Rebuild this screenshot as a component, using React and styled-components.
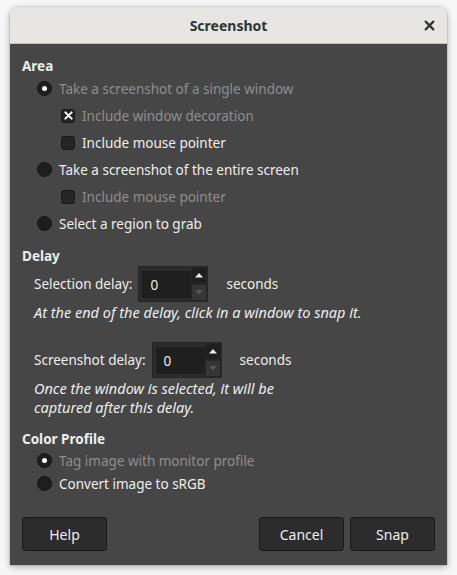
import React from "react";
import styled, { createGlobalStyle } from "styled-components";

const GlobalStyle = createGlobalStyle`
  html, body {
    margin: 0;
    padding: 0;
    background: #f7f7f7;
  }
  body {
    font-family: "Noto Sans", "Open Sans", sans-serif;
    font-size: 13.5px;
  }
`;

const Page = styled.div`
  padding: 7px 10px 10px 10px;
`;

const Window = styled.div`
  width: 437px;
  height: 558px;
  display: flex;
  flex-direction: column;
  border-radius: 8px 8px 0 0;
  overflow: hidden;
  box-shadow: 0 2px 7px rgba(0, 0, 0, 0.3), 0 0 0 1px rgba(0, 0, 0, 0.08);
`;

const TitleBar = styled.div`
  height: 36px;
  flex: none;
  display: grid;
  grid-template-columns: 40px 1fr 40px;
  align-items: center;
  background: #e8e6e3;
  border-bottom: 1px solid #c6c1bc;
  color: #2e3436;
`;

const Title = styled.div`
  grid-column: 2;
  text-align: center;
  font-weight: bold;
  font-size: 14px;
`;

const CloseButton = styled.div`
  display: flex;
  align-items: center;
  justify-content: center;
  padding-left: 4px;
`;

const Body = styled.div`
  flex: 1;
  background: #464646;
  color: #eeeeec;
  padding: 13px 12px 13px 12px;
  display: flex;
  flex-direction: column;
`;

const Heading = styled.div`
  font-weight: bold;
  height: ${(p) => p.$h || 18}px;
  line-height: ${(p) => p.$h || 18}px;
  margin-top: ${(p) => p.$top || 0}px;
`;

const OptionRow = styled.div`
  display: flex;
  align-items: center;
  gap: 7px;
  height: ${(p) => p.$h}px;
  padding-left: ${(p) => p.$indent}px;
  color: ${(p) => (p.$disabled ? "#8e8e8e" : "#eeeeec")};
`;

const Radio = styled.span`
  width: 13px;
  height: 13px;
  flex: none;
  border-radius: 50%;
  background: #1e1e1e;
  border: 1px solid #161616;
  display: flex;
  align-items: center;
  justify-content: center;
  &::after {
    content: "";
    display: ${(p) => (p.$checked ? "block" : "none")};
    width: 5px;
    height: 5px;
    border-radius: 50%;
    background: #ffffff;
  }
`;

const Check = styled.span`
  width: 12px;
  height: 12px;
  flex: none;
  border-radius: 3px;
  background: #252525;
  border: 1px solid #1a1a1a;
  display: flex;
  align-items: center;
  justify-content: center;
`;

const SpinRow = styled.div`
  display: flex;
  align-items: center;
  height: 38px;
  padding-left: 12px;
  margin-top: ${(p) => p.$top || 0}px;
`;

const SpinLabel = styled.span`
  margin-right: 6px;
`;

const SpinFrame = styled.div`
  display: flex;
  width: 70px;
  height: 36px;
  box-sizing: border-box;
  background: #2c2c2c;
  border: 1px solid #262626;
  padding: 0 0 0 3px;
  margin-right: 18px;
`;

const SpinEntry = styled.div`
  flex: 1;
  margin: 4px 0 3px 0;
  background: #1f1f1f;
  padding-left: 8px;
  display: flex;
  align-items: center;
`;

const SpinButtons = styled.div`
  width: 16px;
  display: flex;
  flex-direction: column;
`;

const SpinButton = styled.div`
  flex: 1;
  display: flex;
  align-items: center;
  justify-content: center;
  background: ${(p) => (p.$disabled ? "#363636" : "#1f1f1f")};
  border: 1px solid #262626;
  color: ${(p) => (p.$disabled ? "#555555" : "#eeeeec")};
`;

const Hint = styled.div`
  font-style: italic;
  font-size: 14.5px;
  padding-left: 12px;
  line-height: 19px;
  margin-top: ${(p) => p.$top || 0}px;
`;

const ButtonBar = styled.div`
  display: flex;
  gap: 6px;
  margin-top: 22px;
`;

const Spacer = styled.div`
  flex: 1;
`;

const Button = styled.button`
  width: 85px;
  height: 34px;
  background: #2c2c2c;
  color: #eeeeec;
  border: 1px solid #1a1a1a;
  border-radius: 3px;
  font-family: inherit;
  font-size: 14px;
  padding: 0;
`;

const Arrow = ({ down }) => (
  <svg width="8" height="5" viewBox="0 0 8 5">
    <path d={down ? "M0 0 L8 0 L4 4.5 Z" : "M0 4.5 L8 4.5 L4 0 Z"} fill="currentColor" />
  </svg>
);

const Spin = ({ label, offset }) => (
  <SpinRow $top={offset}>
    <SpinLabel>{label}</SpinLabel>
    <SpinFrame>
      <SpinEntry>0</SpinEntry>
      <SpinButtons>
        <SpinButton>
          <Arrow />
        </SpinButton>
        <SpinButton $disabled>
          <Arrow down />
        </SpinButton>
      </SpinButtons>
    </SpinFrame>
    <span>seconds</span>
  </SpinRow>
);

const XMark = ({ size, color, width }) => (
  <svg width={size} height={size} viewBox="0 0 10 10">
    <path d="M1.5 1.5 L8.5 8.5 M8.5 1.5 L1.5 8.5" stroke={color} strokeWidth={width} strokeLinecap="round" />
  </svg>
);

export default function App() {
  return (
    <Page>
      <GlobalStyle />
      <Window>
        <TitleBar>
          <Title>Screenshot</Title>
          <CloseButton>
            <XMark size={11} color="#2e3436" width={2} />
          </CloseButton>
        </TitleBar>
        <Body>
          <Heading>Area</Heading>
          <OptionRow $h={27} $indent={15} $disabled>
            <Radio $checked />
            Take a screenshot of a single window
          </OptionRow>
          <OptionRow $h={27} $indent={39} $disabled>
            <Check>
              <XMark size={9} color="#ffffff" width={2.2} />
            </Check>
            Include window decoration
          </OptionRow>
          <OptionRow $h={27} $indent={39}>
            <Check />
            Include mouse pointer
          </OptionRow>
          <OptionRow $h={27} $indent={15}>
            <Radio />
            Take a screenshot of the entire screen
          </OptionRow>
          <OptionRow $h={27} $indent={39} $disabled>
            <Check />
            Include mouse pointer
          </OptionRow>
          <OptionRow $h={27} $indent={15}>
            <Radio />
            Select a region to grab
          </OptionRow>

          <Heading $top={10}>Delay</Heading>
          <Spin label="Selection delay:" />
          <Hint>At the end of the delay, click in a window to snap it.</Hint>
          <Spin label="Screenshot delay:" offset={19} />
          <Hint>
            Once the window is selected, it will be
            <br />
            captured after this delay.
          </Hint>

          <Heading $top={12} $h={20}>Color Profile</Heading>
          <OptionRow $h={23} $indent={15} $disabled>
            <Radio $checked />
            Tag image with monitor profile
          </OptionRow>
          <OptionRow $h={23} $indent={15}>
            <Radio />
            Convert image to sRGB
          </OptionRow>

          <ButtonBar>
            <Button>Help</Button>
            <Spacer />
            <Button>Cancel</Button>
            <Button>Snap</Button>
          </ButtonBar>
        </Body>
      </Window>
    </Page>
  );
}
